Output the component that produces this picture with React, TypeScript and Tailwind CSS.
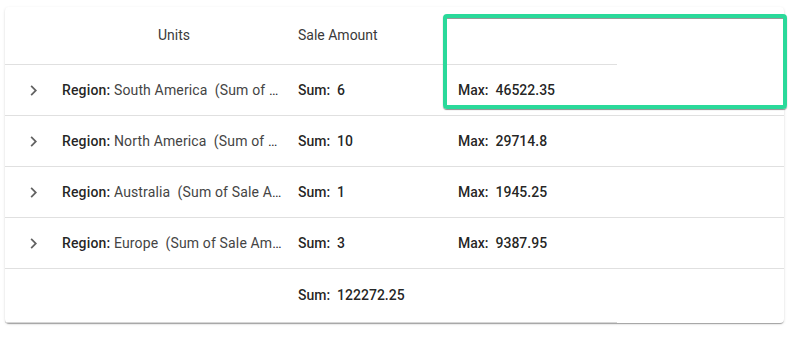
import React from "react";

type GroupRow = { region: string; units: number; max: string };

const rows: GroupRow[] = [
  { region: "South America", units: 6, max: "46522.35" },
  { region: "North America", units: 10, max: "29714.8" },
  { region: "Australia", units: 1, max: "1945.25" },
  { region: "Europe", units: 3, max: "9387.95" },
];

function Chevron() {
  return (
    <svg width="21" height="21" viewBox="0 0 24 24" className="shrink-0 fill-[#616161]">
      <path d="M8.59 16.59 13.17 12 8.59 7.41 10 6l6 6-6 6z" />
    </svg>
  );
}

export default function App() {
  return (
    <div
      className="w-[791px] h-[363px] bg-white pt-[7px] pl-[5px] text-[14px] text-[rgba(0,0,0,0.87)]"
      style={{ fontFamily: "Roboto, 'Liberation Sans', sans-serif" }}
    >
      <div className="relative w-[779px] rounded-[4px] bg-white shadow-[0_2px_1px_-1px_rgba(0,0,0,0.2),0_1px_1px_0_rgba(0,0,0,0.14),0_1px_3px_0_rgba(0,0,0,0.12)]">
        {/* column headers */}
        <div className="flex h-[58px] w-[612px] items-center border-b border-[#e0e0e0]">
          <div className="w-[283px] pl-[153px] text-[#3a3a3a]">Units</div>
          <div className="w-[160px] pl-[10px] text-[#3a3a3a]">Sale Amount</div>
          <div className="w-[169px]" />
        </div>

        {/* grouped rows */}
        {rows.map((r) => (
          <div key={r.region} className="flex h-[51px] items-center border-b border-[#e0e0e0]">
            <div className="flex w-[283px] items-center pl-[18px] pr-[6px]">
              <Chevron />
              <div className="ml-[18px] min-w-0 flex-1 truncate whitespace-pre tracking-[0.15px]">
                <span className="font-medium">Region:</span>
                <span className="text-[#444]">{" " + r.region + "  (Sum of Sale Amount)"}</span>
              </div>
            </div>
            <div className="w-[160px] pl-[10px] font-medium whitespace-pre">{"Sum:  " + r.units}</div>
            <div className="w-[169px] pl-[10px] font-medium whitespace-pre">{"Max:  " + r.max}</div>
          </div>
        ))}

        {/* totals */}
        <div className="flex h-[54px] w-[612px] items-center border-b border-[#d6d6d6]">
          <div className="w-[283px]" />
          <div className="w-[160px] pl-[10px] font-medium whitespace-pre">Sum:  122272.25</div>
        </div>

        {/* selection highlight */}
        <div className="pointer-events-none absolute left-[438px] top-[7px] h-[95px] w-[344px] rounded-[4px] border-4 border-[#2ad99a] shadow-[inset_0_1px_0_rgba(0,0,0,0.4),0_1px_1px_rgba(0,0,0,0.45)]" />
      </div>
    </div>
  );
}
